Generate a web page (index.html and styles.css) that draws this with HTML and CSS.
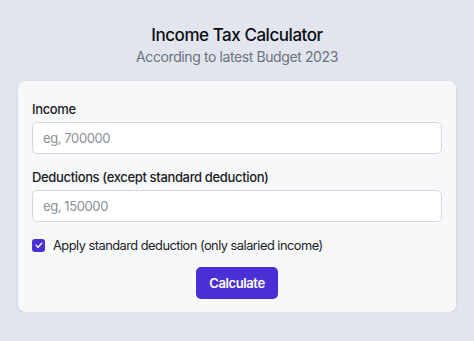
FILE: index.html
```html
<!DOCTYPE html>
<html lang="en">
<head>
  <meta charset="UTF-8" />
  <meta name="viewport" content="width=device-width, initial-scale=1.0">
  <title>Income Tax Calculator</title>
  <link rel="stylesheet" href="styles.css">
</head>
<body>

  <!-- Title -->
  <header>
    <h1>Income Tax Calculator</h1>
    <p>According to latest Budget 2023</p>
  </header>

  <form class="card" onsubmit="return false">
    <div class="field">
      <label for="income">Income</label>
      <input type="text" id="income" placeholder="eg, 700000">
    </div>

    <div class="field">
      <label for="deductions">Deductions (except standard deduction)</label>
      <input type="text" id="deductions" placeholder="eg, 150000">
    </div>

    <label class="check">
      <span class="box">
        <svg viewBox="0 0 16 16" width="10" height="10"><path d="M3.5 8.5l3 3 6-6.5" fill="none" stroke="#fff" stroke-width="2.2" stroke-linecap="round" stroke-linejoin="round"/></svg>
      </span>
      Apply standard deduction (only salaried income)
    </label>

    <div class="actions">
      <button type="submit" class="btn">Calculate</button>
    </div>
  </form>

</body>
</html>
```

FILE: styles.css
```css
:root {
  --fondo: #e2e5ee;
  --card: #f7f8fa;
  --texto: #111827;
  --gris: #6b7280;
  --indigo: #4a30d4;
}
* { box-sizing: border-box; }
body {
  margin: 0;
  padding-top: 24px;
  font-family: Inter, 'Noto Sans', sans-serif;
  background: var(--fondo);
  color: var(--texto);
}
header {
  text-align: center;
}
header h1 {
  margin: 0;
  font-size: 17px;
  line-height: 23px;
  font-weight: 500;
  letter-spacing: -0.45px;
  color: #0b0d12;
}
header p {
  margin: 0;
  font-size: 14px;
  line-height: 20px;
  letter-spacing: -0.4px;
  color: var(--gris);
}
.card {
  margin: 14px 18px 0;
  padding: 18px 14px 13px;
  background: var(--card);
  border-radius: 7px;
  box-shadow: 0 1px 3px rgba(0,0,0,0.12);
}
.field {
  margin-bottom: 13px;
}
.field label {
  display: block;
  font-size: 13px;
  line-height: 20px;
  font-weight: 500;
  letter-spacing: -0.35px;
  margin-bottom: 3px;
  color: #1a1d24;
}
.field input {
  display: block;
  width: 100%;
  height: 32px;
  padding: 0 10px;
  font-family: inherit;
  font-size: 13px;
  letter-spacing: -0.4px;
  border: 1px solid #d4d7dd;
  border-radius: 5px;
  background: #fff;
  color: var(--texto);
}
.field input::placeholder {
  color: #8a8f99;
}
.check {
  display: flex;
  align-items: center;
  gap: 8px;
  height: 20px;
  margin-top: 12px;
  font-size: 12.8px;
  letter-spacing: -0.5px;
  color: #1a1d24;
}
.box {
  display: flex;
  align-items: center;
  justify-content: center;
  width: 13px;
  height: 13px;
  border-radius: 3px;
  background: var(--indigo);
}
.actions {
  margin-top: 12px;
  text-align: center;
}
.btn {
  height: 32px;
  width: 82px;
  border: 0;
  border-radius: 5px;
  background: var(--indigo);
  color: #fff;
  font-family: inherit;
  font-size: 13px;
  font-weight: 600;
  letter-spacing: -0.4px;
}
```
